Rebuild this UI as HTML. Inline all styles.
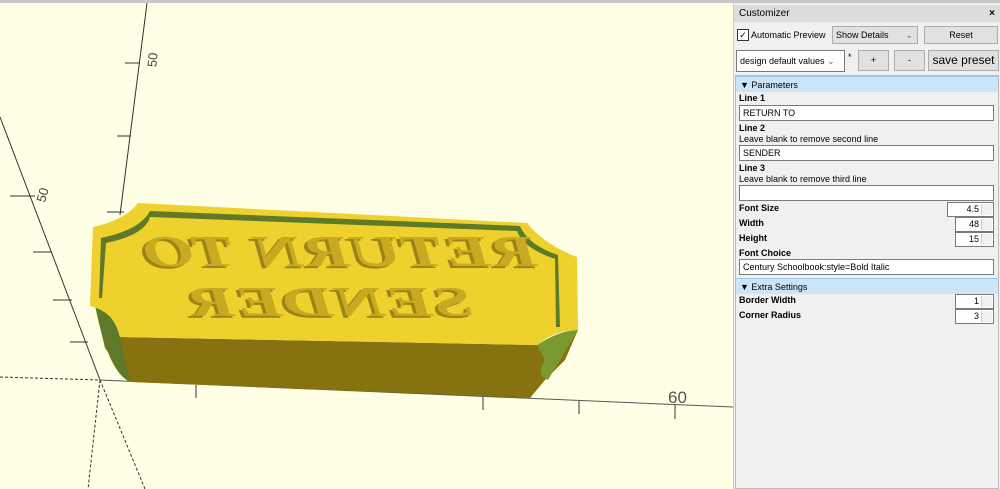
<!DOCTYPE html><html><head><style>
body{margin:0;width:1000px;height:489px;overflow:hidden;background:#ffffe5;font-family:"Liberation Sans",sans-serif;font-size:9px;position:relative}
.p{position:absolute;left:733px;top:3px;width:267px;height:486px;background:#f0f0f0;border-left:1px solid #ccc}
.a{position:absolute}
.btn{position:absolute;background:#e1e1e1;border:1px solid #adadad;text-align:center;box-sizing:border-box}
.in{position:absolute;background:#fff;border:1px solid #7a7a7a;box-sizing:border-box;padding-left:3px;line-height:14px}
.b{position:absolute;font-weight:bold;left:5px}
.hd{position:absolute;left:2px;width:262px;height:16px;background:#cce4f7;border-top:1px solid #99c9ef;line-height:16px;padding-left:4px;box-sizing:border-box}
.sp{position:absolute;background:#fff;border:1px solid #7a7a7a;box-sizing:border-box;text-align:right;padding-right:14px;line-height:13px;height:15px}
.sp:after{content:"";position:absolute;right:1px;top:1px;width:10px;height:11px;border-left:1px solid #ccc;background:#f0f0f0}
</style></head><body>
<div class="a" style="left:0;top:0;width:1000px;height:3px;background:#c8c8c8"></div>
<svg class="a" style="left:0;top:0" width="733" height="489">
<g stroke="#333" stroke-width="1" fill="none">
<line x1="0" y1="377" x2="100" y2="380" stroke-dasharray="3,2"/>
<line x1="100" y1="380" x2="733" y2="407" stroke="#555"/>
<line x1="147" y1="3" x2="120" y2="215"/>
<line x1="0" y1="117" x2="100" y2="380"/>
<line x1="100" y1="380" x2="145" y2="489" stroke-dasharray="3,2"/>
<line x1="100" y1="380" x2="88" y2="489" stroke-dasharray="3,2"/>
<line x1="125" y1="63" x2="140" y2="63"/><line x1="117" y1="136" x2="131" y2="136"/><line x1="107" y1="212" x2="124" y2="212"/>
<line x1="10" y1="196" x2="35" y2="196"/><line x1="33" y1="252" x2="52" y2="252"/><line x1="53" y1="300" x2="72" y2="300"/><line x1="70" y1="342" x2="88" y2="342"/>
<line x1="196" y1="385" x2="196" y2="398"/><line x1="483" y1="397" x2="483" y2="410"/><line x1="579" y1="401" x2="579" y2="414"/><line x1="675" y1="405" x2="675" y2="419"/>
</g>
<text x="668" y="403" font-size="17" fill="#555" font-family="Liberation Sans">60</text>
<text x="145" y="65" font-size="13" fill="#444" transform="rotate(-85 152 60)">50</text>
<text x="35" y="200" font-size="13" fill="#444" transform="rotate(-75 42 195)">50</text>
<polygon points="120,337 537,345 578,330 565,360 545,380 530,398 130,382 105,348 95,305" fill="#867310"/>
<path d="M95,305 Q115,315 120,337 L130,382 Q108,372 95,305Z" fill="#5e7a28"/>
<path d="M537,345 Q560,330 578,330 L548,380 Q535,375 545,360Z" fill="#7a9a30"/>
<path d="M138,203 L527,223 Q545,245 577,257 L578,330 Q555,330 537,345 L120,337 Q115,312 90,306 L93,227 Q125,220 138,203Z" fill="#efd12e"/>
<path d="M150,211 L520,226 Q528,245 558,255 L560,327 L556,327 L555,259 Q523,248 517,231 L150,217 Q145,235 106,243 L102,298 L99,298 L101,238 Q140,230 150,211Z" fill="#5e7a28"/>
<g fill="#9a8418" font-family="Liberation Serif" font-weight="bold" font-style="italic">
<text x="-535" y="268" font-size="44" transform="scale(-1,1)" textLength="395" lengthAdjust="spacingAndGlyphs">RETURN TO</text>
<text x="-470" y="318" font-size="42" transform="scale(-1,1)" textLength="285" lengthAdjust="spacingAndGlyphs">SENDER</text>
</g>
<g fill="#c8aa22" font-family="Liberation Serif" font-weight="bold" font-style="italic">
<text x="-538" y="266" font-size="44" transform="scale(-1,1)" textLength="395" lengthAdjust="spacingAndGlyphs">RETURN TO</text>
<text x="-473" y="316" font-size="42" transform="scale(-1,1)" textLength="285" lengthAdjust="spacingAndGlyphs">SENDER</text>
</g>
</svg>
<div class="p">
<div class="a" style="left:0;top:2px;width:267px;height:17px;background:#dcdcdc;line-height:17px;padding-left:5px;box-sizing:border-box;font-size:10px">Customizer<span style="position:absolute;right:6px;font-weight:bold">×</span></div>
<div class="a" style="left:3px;top:26px;width:10px;height:10px;border:1px solid #333;background:#fff;font-size:9px;line-height:10px;text-align:center">✓</div>
<div class="a" style="left:17px;top:27px">Automatic Preview</div>
<div class="btn" style="left:98px;top:23px;width:86px;height:18px;line-height:16px;text-align:left;padding-left:3px">Show Details<span style="float:right;margin-right:4px;color:#666">⌄</span></div>
<div class="btn" style="left:190px;top:23px;width:74px;height:18px;line-height:16px">Reset</div>
<div class="in" style="left:2px;top:47px;width:109px;height:22px;line-height:20px">design default values <span style="color:#666">⌄</span></div>
<div class="a" style="left:114px;top:49px">*</div>
<div class="btn" style="left:124px;top:47px;width:31px;height:21px;line-height:19px">+</div>
<div class="btn" style="left:160px;top:47px;width:31px;height:21px;line-height:19px">-</div>
<div class="btn" style="left:194px;top:47px;width:71px;height:21px;line-height:19px;font-size:12px">save preset</div>
<div class="a" style="left:1px;top:72px;width:264px;height:414px;border:1px solid #bbb;box-sizing:border-box"></div>
<div class="hd" style="top:73px">▼ Parameters</div>
<div class="b" style="top:90px">Line 1</div>
<div class="in" style="left:5px;top:102px;width:255px;height:16px">RETURN TO</div>
<div class="b" style="top:120px">Line 2</div>
<div class="a" style="left:5px;top:131px">Leave blank to remove second line</div>
<div class="in" style="left:5px;top:142px;width:255px;height:16px">SENDER</div>
<div class="b" style="top:160px">Line 3</div>
<div class="a" style="left:5px;top:171px">Leave blank to remove third line</div>
<div class="in" style="left:5px;top:182px;width:255px;height:16px"></div>
<div class="b" style="top:200px">Font Size</div><div class="sp" style="left:213px;top:199px;width:47px">4.5</div>
<div class="b" style="top:215px">Width</div><div class="sp" style="left:221px;top:214px;width:39px">48</div>
<div class="b" style="top:230px">Height</div><div class="sp" style="left:221px;top:229px;width:39px">15</div>
<div class="b" style="top:245px">Font Choice</div>
<div class="in" style="left:5px;top:256px;width:255px;height:16px">Century Schoolbook:style=Bold Italic</div>
<div class="hd" style="top:275px">▼ Extra Settings</div>
<div class="b" style="top:292px">Border Width</div><div class="sp" style="left:221px;top:291px;width:39px">1</div>
<div class="b" style="top:307px">Corner Radius</div><div class="sp" style="left:221px;top:306px;width:39px">3</div>
</div>
</body></html>
